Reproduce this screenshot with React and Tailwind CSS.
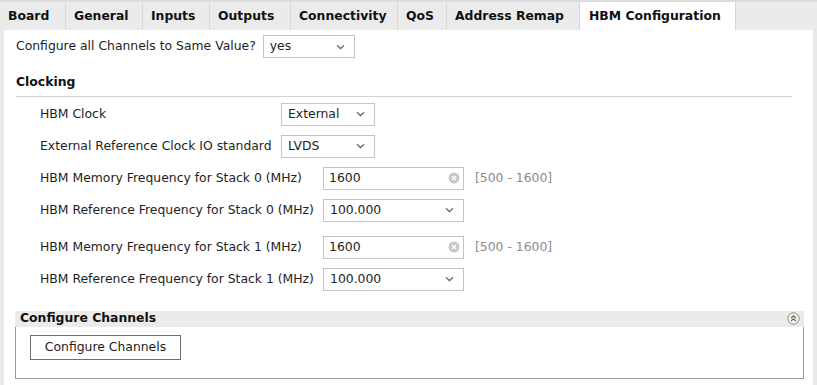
import React from 'react';

const tabs = [
  { name: 'Board', w: 'w-[66px]' },
  { name: 'General', w: 'w-[77px]' },
  { name: 'Inputs', w: 'w-[67px]' },
  { name: 'Outputs', w: 'w-[81px]' },
  { name: 'Connectivity', w: 'w-[107px]' },
  { name: 'QoS', w: 'w-[49px]' },
  { name: 'Address Remap', w: 'w-[133px]' },
  { name: 'HBM Configuration', w: 'w-[156px]', active: true },
];

const Chevron = () => (
  <svg width="9" height="6" viewBox="0 0 9 6" fill="none">
    <path d="M1 1.2L4.5 4.6L8 1.2" stroke="#7a7a7a" strokeWidth="1.5" />
  </svg>
);

const ClearIcon = () => (
  <svg width="12" height="12" viewBox="0 0 12 12">
    <circle cx="6" cy="6" r="5.5" fill="#c8c8c8" />
    <path d="M4 4L8 8M8 4L4 8" stroke="#ffffff" strokeWidth="1.4" />
  </svg>
);

const CollapseIcon = () => (
  <svg width="13" height="13" viewBox="0 0 13 13" fill="none">
    <circle cx="6.5" cy="6.5" r="5.7" stroke="#8a8a7a" strokeWidth="1" fill="#f4f4ee" />
    <path d="M4 6L6.5 3.8L9 6M4 9L6.5 6.8L9 9" stroke="#6a6a5a" strokeWidth="1.1" />
  </svg>
);

const Select = ({ value, w }) => (
  <div className={`${w} h-[23px] border border-[#c4c4c4] bg-white flex items-center justify-between pl-[6px] pr-[9px]`}>
    <span>{value}</span>
    <Chevron />
  </div>
);

const NumInput = ({ value }) => (
  <div className="flex items-center">
    <div className="w-[141px] h-[23px] border border-[#c4c4c4] bg-white flex items-center justify-between pl-[5px] pr-[3px]">
      <span>{value}</span>
      <ClearIcon />
    </div>
    <span className="ml-[11px] text-[#8c8c8c]">[500 - 1600]</span>
  </div>
);

const Row = ({ label, labelW, children, mt = 'mt-[9px]' }) => (
  <div className={`flex items-center ${mt}`}>
    <span className={`${labelW} shrink-0`}>{label}</span>
    {children}
  </div>
);

export default function App() {
  return (
    <div
      className="w-[817px] h-[385px] bg-[#e9e9e9] flex flex-col text-[12.4px] text-[#1e1e1e] overflow-hidden"
      style={{ fontFamily: '"DejaVu Sans", Verdana, sans-serif' }}
    >
      {/* Tab bar */}
      <div className="h-[30px] border-t-[2px] border-[#dcdcdc] bg-[#ebebeb] flex shrink-0">
        {tabs.map((t) => (
          <div
            key={t.name}
            className={`${t.w} h-full flex items-center pl-[8px] font-bold text-[#111] border-r border-[#d7d7d7] ${
              t.active ? 'bg-white pl-[9px]' : ''
            }`}
          >
            {t.name}
          </div>
        ))}
      </div>

      {/* Content */}
      <div className="flex-1 mx-[4px] bg-white pl-[12px] pr-[9px] flex flex-col">
        <div className="flex items-center mt-[5px]">
          <span className="mr-[7px]">Configure all Channels to Same Value?</span>
          <Select value="yes" w="w-[92px]" />
        </div>

        <div className="mt-[15px] font-bold text-[#111] pb-[4px] border-b border-[#d2d2d2] mr-[12px]">Clocking</div>

        <div className="pl-[24px] mt-[2px]">
          <Row label="HBM Clock" labelW="w-[241px]" mt="mt-[4px]">
            <Select value="External" w="w-[94px]" />
          </Row>
          <Row label="External Reference Clock IO standard" labelW="w-[241px]">
            <Select value="LVDS" w="w-[94px]" />
          </Row>
          <Row label="HBM Memory Frequency for Stack 0 (MHz)" labelW="w-[283px]">
            <NumInput value="1600" />
          </Row>
          <Row label="HBM Reference Frequency for Stack 0 (MHz)" labelW="w-[283px]">
            <Select value="100.000" w="w-[141px]" />
          </Row>
          <Row label="HBM Memory Frequency for Stack 1 (MHz)" labelW="w-[283px]" mt="mt-[14px]">
            <NumInput value="1600" />
          </Row>
          <Row label="HBM Reference Frequency for Stack 1 (MHz)" labelW="w-[283px]">
            <Select value="100.000" w="w-[141px]" />
          </Row>
        </div>

        {/* Configure Channels section */}
        <div className="mt-[20px] w-[789px] -ml-[1px]">
          <div className="h-[16px] bg-[#ebebeb] flex items-center justify-between pl-[5px] pr-[4px]">
            <span className="font-bold text-[#111]">Configure Channels</span>
            <CollapseIcon />
          </div>
          <div className="h-[52px] border border-t-0 border-[#9a9a9a] pt-[8px] pl-[14px]">
            <button className="w-[151px] h-[25px] border border-[#707070] bg-white text-[12.4px] text-[#1e1e1e]">
              Configure Channels
            </button>
          </div>
        </div>
      </div>
    </div>
  );
}
